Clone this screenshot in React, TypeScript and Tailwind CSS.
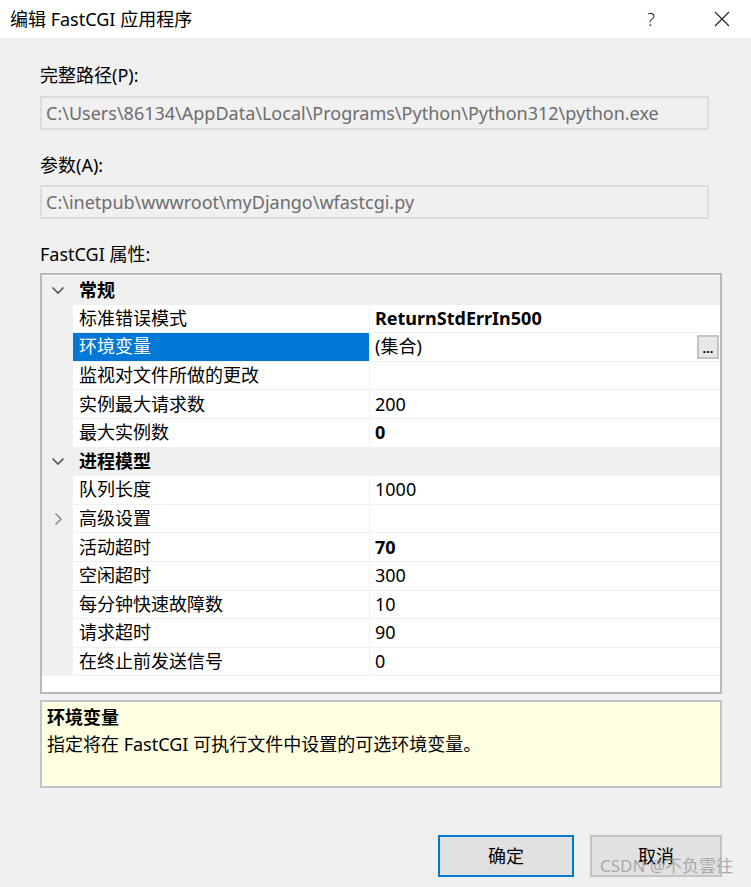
import React from "react";

type Row =
  | { kind: "header"; label: string }
  | { kind: "prop"; name: string; value: string; bold?: boolean; selected?: boolean; expandable?: boolean; button?: boolean };

const rows: Row[] = [
  { kind: "header", label: "常规" },
  { kind: "prop", name: "标准错误模式", value: "ReturnStdErrIn500", bold: true },
  { kind: "prop", name: "环境变量", value: "(集合)", selected: true, button: true },
  { kind: "prop", name: "监视对文件所做的更改", value: "" },
  { kind: "prop", name: "实例最大请求数", value: "200" },
  { kind: "prop", name: "最大实例数", value: "0", bold: true },
  { kind: "header", label: "进程模型" },
  { kind: "prop", name: "队列长度", value: "1000" },
  { kind: "prop", name: "高级设置", value: "", expandable: true },
  { kind: "prop", name: "活动超时", value: "70", bold: true },
  { kind: "prop", name: "空闲超时", value: "300" },
  { kind: "prop", name: "每分钟快速故障数", value: "10" },
  { kind: "prop", name: "请求超时", value: "90" },
  { kind: "prop", name: "在终止前发送信号", value: "0" },
];

function ChevronDown() {
  return (
    <svg width="14" height="9" viewBox="0 0 14 9">
      <path d="M1.5 1.5 L7 7 L12.5 1.5" fill="none" stroke="#555" strokeWidth="1.6" />
    </svg>
  );
}

function ChevronRight() {
  return (
    <svg width="9" height="14" viewBox="0 0 9 14">
      <path d="M1.5 1.5 L7 7 L1.5 12.5" fill="none" stroke="#8a8a8a" strokeWidth="1.5" />
    </svg>
  );
}

function PropRow({ row }: { row: Row }) {
  if (row.kind === "header") {
    return (
      <div className="flex h-[28.6px] items-center bg-[#f0f0f0]">
        <div className="flex w-[31px] justify-center">
          <ChevronDown />
        </div>
        <div className="pl-[6px] font-bold">{row.label}</div>
      </div>
    );
  }
  return (
    <div className="flex h-[28.6px] bg-[#f0f0f0]">
      <div className="flex w-[31px] items-center justify-center pl-[2px]">
        {row.expandable && <ChevronRight />}
      </div>
      <div
        className={
          row.selected
            ? "mb-[1px] flex w-[296px] items-center bg-[#0078d7] pl-[6px] text-white"
            : "mb-[1px] flex w-[296px] items-center bg-white pl-[6px]"
        }
      >
        {row.name}
      </div>
      <div className="mb-[1px] ml-[1px] flex flex-1 items-center bg-white pl-[5px]">
        <span className={row.bold ? "font-bold" : ""}>{row.value}</span>
        {row.button && (
          <div className="ml-auto mr-[1px] flex h-[24px] w-[22px] items-end justify-center border-2 border-[#c4c4c4] bg-[#e8e8e8] pb-[2px] text-[13px] font-bold leading-none">
            ...
          </div>
        )}
      </div>
    </div>
  );
}

export default function App() {
  return (
    <div
      className="relative h-[887px] w-[751px] overflow-hidden bg-[#f0f0f0] text-[18px] text-black"
      style={{ fontFamily: '"Noto Sans", "Noto Sans CJK SC", sans-serif' }}
    >
      <div className="flex h-[38px] items-center bg-white pl-[10px]">
        <span>编辑 FastCGI 应用程序</span>
        <span className="ml-auto mr-[59px] text-[18px] font-light text-[#222]">?</span>
        <svg width="16" height="16" viewBox="0 0 16 16" className="mr-[21px]">
          <path d="M1 1 L15 15 M15 1 L1 15" stroke="#222" strokeWidth="1.1" />
        </svg>
      </div>

      <div className="px-[40px]">
        <div className="pt-[26px] leading-[22px]">完整路径(P):</div>
        <div className="mt-[10px] flex h-[34px] w-[669px] items-center border-2 border-[#dcdcdc] pl-[4px] text-[#6d6d6d]">
          C:\Users\86134\AppData\Local\Programs\Python\Python312\python.exe
        </div>
        <div className="mt-[24px] leading-[22px]">参数(A):</div>
        <div className="mt-[9px] flex h-[34px] w-[669px] items-center border-2 border-[#dcdcdc] pl-[4px] text-[#6d6d6d]">
          C:\inetpub\wwwroot\myDjango\wfastcgi.py
        </div>
        <div className="mt-[24px] leading-[22px]">FastCGI 属性:</div>

        <div className="mt-[8px] flex h-[421px] w-[682px] flex-col border-2 border-[#b9b9b9] bg-white pt-[1px]">
          {rows.map((row, i) => (
            <PropRow key={i} row={row} />
          ))}
        </div>

        <div className="mt-[6px] h-[88px] w-[682px] border-2 border-[#c4c4c4] bg-[#ffffe1] px-[5px] pt-[2px]">
          <div className="font-bold leading-[26px]">环境变量</div>
          <div className="leading-[28px]">指定将在 FastCGI 可执行文件中设置的可选环境变量。</div>
        </div>

        <div className="ml-[398px] mt-[47px] flex w-[290px] gap-[16px]">
          <button className="flex h-[42px] w-[136px] shrink-0 items-center justify-center border-2 border-[#0078d7] bg-[#e1e1e1]">
            确定
          </button>
          <button className="flex h-[42px] w-[132px] shrink-0 items-center justify-center border-2 border-[#c4c4c4] bg-[#e1e1e1]">
            取消
          </button>
        </div>
      </div>

      <div className="absolute left-[600px] top-[854px] text-[17px] leading-[24px] text-[#9a9a9a]/80">
        CSDN @不负雲往
      </div>
    </div>
  );
}
